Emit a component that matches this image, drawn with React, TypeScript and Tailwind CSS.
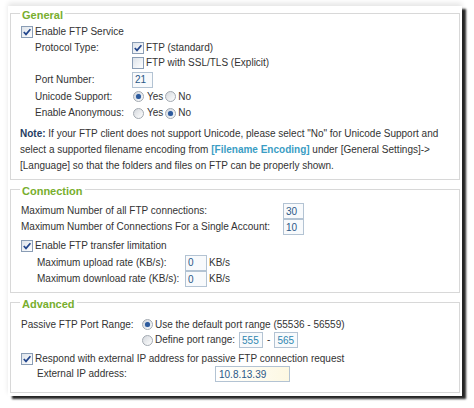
import React from 'react';

const Check = ({ on }: { on?: boolean }) => (
    <span className="w-[12px] h-[12px] shrink-0 border border-[#8a9db5] bg-gradient-to-br from-[#dde3ea] to-white flex items-center justify-center">
        {on && (
            <svg width="10" height="10" viewBox="0 0 10 10">
                <path d="M1.8 5 L4 7.4 L8.4 2.2" stroke="#22458c" strokeWidth="1.7" fill="none" />
            </svg>
        )}
    </span>
);

const Radio = ({ on }: { on?: boolean }) => (
    <span className="w-[11px] h-[11px] shrink-0 rounded-full border border-[#a2a9b1] bg-gradient-to-br from-[#d4d8dd] to-white flex items-center justify-center">
        {on && <span className="w-[5px] h-[5px] rounded-full bg-[#2d5a9c] shadow-[0_0_1px_#6c9ad6]" />}
    </span>
);

const Field = ({ value, w, color = "text-[#2b5887]" }: { value: string; w: string; color?: string }) => (
    <input
        readOnly
        value={value}
        className={`${w} ${color} h-[16px] border border-[#b3c3d3] bg-[#f8fafc] px-[2px] text-[10px] leading-[14px] outline-none`}
    />
);

export default function App() {
    const legendStyle = "ml-[9px] px-[2px] pt-[3px] text-[11px] leading-[12px] font-bold text-[#78ae2e]";

    return (
        <div className="w-[474px] h-[408px] bg-white overflow-hidden font-['Liberation_Sans',Arial,sans-serif] text-[10px] leading-[16px] text-[#333]">
            {/* panel */}
            <div className="ml-[8px] mt-[6px] w-[454px] h-[390px] bg-white px-[2px] pb-[3px] flex flex-col shadow-[0_-3px_5px_rgba(0,0,0,0.1),4px_3px_2px_rgba(0,0,0,0.85)]">

                {/* General */}
                <fieldset className="border border-[#d8d8d8] pt-[3px] pb-[5px]">
                    <legend className={legendStyle}>General</legend>
                    <div className="h-[16px] flex items-center gap-[2px] pl-[10px]">
                        <Check on /> Enable FTP Service
                    </div>
                    <div className="pl-[24px] grid grid-cols-[97px_1fr]">
                        <div className="h-[15px] flex items-center">Protocol Type:</div>
                        <div className="h-[15px] flex items-center gap-[2px]"><Check on /> FTP (standard)</div>
                        <div className="h-[16px]" />
                        <div className="h-[16px] flex items-center gap-[2px]"><Check /> FTP with SSL/TLS (Explicit)</div>
                        <div className="h-[17px] flex items-center">Port Number:</div>
                        <div className="h-[17px] flex items-center"><Field value="21" w="w-[21px]" /></div>
                        <div className="h-[17px] flex items-center">Unicode Support:</div>
                        <div className="h-[17px] flex items-center pl-[1px]">
                            <Radio on /><span className="ml-[3px] mr-[2px]">Yes</span><Radio /><span className="ml-[2px]">No</span>
                        </div>
                        <div className="h-[16px] flex items-center">Enable Anonymous:</div>
                        <div className="h-[16px] flex items-center pl-[1px]">
                            <Radio /><span className="ml-[3px] mr-[2px]">Yes</span><Radio on /><span className="ml-[2px]">No</span>
                        </div>
                    </div>
                    <p className="mt-[5px] pl-[9px] whitespace-nowrap">
                        <b className="text-[#253d63]">Note:</b> If your FTP client does not support Unicode, please select "No" for Unicode Support and<br />
                        select a supported filename encoding from <b className="text-[#3a9dc4]">[Filename Encoding]</b> under [General Settings]-&gt;<br />
                        [Language] so that the folders and files on FTP can be properly shown.
                    </p>
                </fieldset>

                {/* Connection */}
                <fieldset className="mt-[2px] border border-[#d8d8d8] pt-[6px] pb-[5px]">
                    <legend className={legendStyle}>Connection</legend>
                    <div className="pl-[10px] grid grid-cols-[262px_1fr]">
                        <div className="h-[16px] flex items-center">Maximum Number of all FTP connections:</div>
                        <div className="h-[16px] flex items-center"><Field value="30" w="w-[21px]" /></div>
                        <div className="h-[16px] flex items-center">Maximum Number of Connections For a Single Account:</div>
                        <div className="h-[16px] flex items-center"><Field value="10" w="w-[21px]" /></div>
                    </div>
                    <div className="mt-[3px] h-[16px] flex items-center gap-[2px] pl-[10px]">
                        <Check on /> Enable FTP transfer limitation
                    </div>
                    <div className="pl-[26px] grid grid-cols-[148px_1fr]">
                        <div className="h-[17px] flex items-center">Maximum upload rate (KB/s):</div>
                        <div className="h-[17px] flex items-center gap-[2px]"><Field value="0" w="w-[22px]" /> KB/s</div>
                        <div className="h-[16px] flex items-center">Maximum download rate (KB/s):</div>
                        <div className="h-[16px] flex items-center gap-[2px]"><Field value="0" w="w-[22px]" /> KB/s</div>
                    </div>
                </fieldset>

                {/* Advanced */}
                <fieldset className="mt-[2px] flex-1 border border-[#d8d8d8] pt-[7px]">
                    <legend className={legendStyle}>Advanced</legend>
                    <div className="pl-[10px] grid grid-cols-[121px_1fr]">
                        <div className="h-[15px] flex items-center">Passive FTP Port Range:</div>
                        <div className="h-[15px] flex items-center gap-[2px]"><Radio on /> Use the default port range (55536 - 56559)</div>
                        <div className="h-[16px]" />
                        <div className="h-[16px] flex items-center gap-[2px]">
                            <Radio /> Define port range:
                            <span className="ml-[2px] flex"><Field value="555" w="w-[24px]" color="text-[#2f86b0]" /></span>
                            <span className="mx-[2px]">-</span>
                            <Field value="565" w="w-[24px]" color="text-[#2f86b0]" />
                        </div>
                    </div>
                    <div className="mt-[3px] h-[15px] flex items-center gap-[2px] pl-[10px]">
                        <Check on /> Respond with external IP address for passive FTP connection request
                    </div>
                    <div className="pl-[26px] grid grid-cols-[178px_1fr]">
                        <div className="h-[16px] flex items-center">External IP address:</div>
                        <div className="h-[16px] flex items-center">
                            <input
                                readOnly
                                value="10.8.13.39"
                                className="w-[75px] h-[16px] border border-[#b3c3d3] bg-gradient-to-r from-white to-[#fdf8e2] text-[#2b5887] px-[3px] text-[10px] leading-[14px] outline-none"
                            />
                        </div>
                    </div>
                </fieldset>
            </div>
        </div>
    );
}
